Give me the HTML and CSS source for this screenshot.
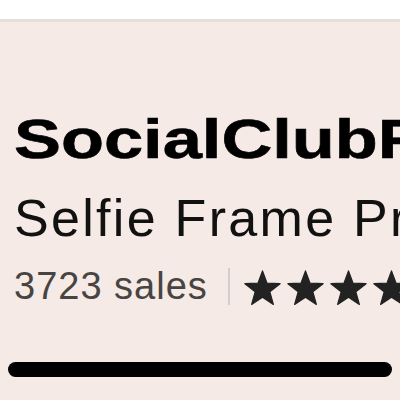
FILE: index.html
```html
<!DOCTYPE html>
<html lang="en">
<head>
    <meta charset="UTF-8">
    <meta name="viewport" content="width=device-width, initial-scale=1.0">
    <title>SocialClubFrames</title>
    <link rel="stylesheet" href="styles.css">
</head>
<body>
    <div class="topbar"></div>

    <div class="shop">
        <h1 class="shop-name"><span>SocialClubFrames</span></h1>
        <p class="shop-title">Selfie Frame Props</p>

        <div class="shop-stats">
            <span class="sales">3723 sales</span>
            <span class="divider"></span>
            <div class="stars">
                <svg viewBox="0 0 24 24"><path d="M12 .6l2.94 7.95 8.47.34-6.65 5.26 2.29 8.16L12 17.6l-7.05 4.71 2.29-8.16L.59 8.89l8.47-.34z"/></svg>
                <svg viewBox="0 0 24 24"><path d="M12 .6l2.94 7.95 8.47.34-6.65 5.26 2.29 8.16L12 17.6l-7.05 4.71 2.29-8.16L.59 8.89l8.47-.34z"/></svg>
                <svg viewBox="0 0 24 24"><path d="M12 .6l2.94 7.95 8.47.34-6.65 5.26 2.29 8.16L12 17.6l-7.05 4.71 2.29-8.16L.59 8.89l8.47-.34z"/></svg>
                <svg viewBox="0 0 24 24"><path d="M12 .6l2.94 7.95 8.47.34-6.65 5.26 2.29 8.16L12 17.6l-7.05 4.71 2.29-8.16L.59 8.89l8.47-.34z"/></svg>
                <svg viewBox="0 0 24 24"><path d="M12 .6l2.94 7.95 8.47.34-6.65 5.26 2.29 8.16L12 17.6l-7.05 4.71 2.29-8.16L.59 8.89l8.47-.34z"/></svg>
            </div>
        </div>

        <div class="home-bar"></div>
    </div>
</body>
</html>
```

FILE: styles.css
```css
html, body {
    margin: 0;
    padding: 0;
    height: 100%;
}
body {
    font-family: "Liberation Sans", Arial, sans-serif;
    background-color: #f5eae5;
    overflow: hidden;
}
.topbar {
    height: 19px;
    background: #ffffff;
    border-bottom: 3px solid #e3e0db;
}
.shop {
    padding: 0 0 0 14px;
    overflow: hidden;
}
.shop-name {
    margin: 87px 0 0 0;
    font-size: 55px;
    line-height: 60px;
    font-weight: bold;
    color: #000000;
    white-space: nowrap;
}
.shop-name span {
    display: inline-block;
    transform: scaleX(1.28);
    transform-origin: left center;
    -webkit-text-stroke: 0.6px #000000;
}
.shop-title {
    margin: 21px 0 0 0;
    font-size: 52px;
    line-height: 56px;
    color: #111111;
    letter-spacing: 2.3px;
    white-space: nowrap;
}
.shop-stats {
    display: flex;
    align-items: center;
    margin-top: 20px;
    height: 40px;
    white-space: nowrap;
}
.sales {
    font-size: 38px;
    line-height: 40px;
    color: #474442;
    letter-spacing: 1px;
    flex-shrink: 0;
}
.divider {
    flex-shrink: 0;
    width: 2px;
    height: 37px;
    background: #d3cecb;
    margin: 0 14px 0 20px;
}
.stars {
    display: flex;
    gap: 6px;
    flex-shrink: 0;
    margin-top: 4px;
}
.stars svg {
    width: 37px;
    height: 37px;
    fill: #222222;
    stroke: #222222;
    stroke-width: 0.8;
    stroke-linejoin: round;
    flex-shrink: 0;
}
.home-bar {
    height: 15px;
    margin: 56px 8px 0 -6px;
    background: #000000;
    border-radius: 8px;
}
```
